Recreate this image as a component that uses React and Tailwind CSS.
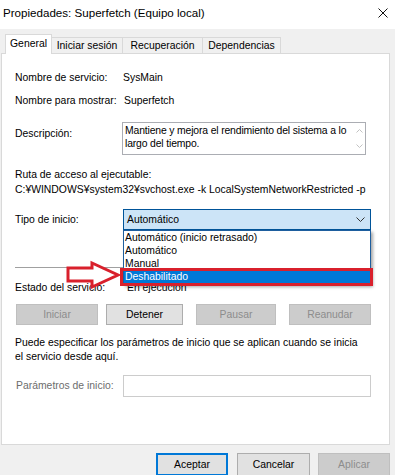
import React from "react";

const tabs = [
  { id: "general", label: "General", w: "w-[47px]" },
  { id: "logon", label: "Iniciar sesión", w: "w-[71px]" },
  { id: "recovery", label: "Recuperación", w: "w-[80px]" },
  { id: "deps", label: "Dependencias", w: "w-[78px]" },
];

const startTypes = [
  "Automático (inicio retrasado)",
  "Automático",
  "Manual",
  "Deshabilitado",
];

function WinButton({ children, disabled, isDefault, className = "" }) {
  // Win10 style push button
  let look = "bg-[#e1e1e1] border border-[#adadad] text-black";
  if (disabled) look = "bg-[#cccccc] border border-[#bfbfbf] text-[#8d8d8d]";
  if (isDefault) look = "bg-[#e1e1e1] border-2 border-[#0078d7] text-black";
  return (
    <div className={`flex items-center justify-center ${look} ${className}`}>
      {children}
    </div>
  );
}

export default function App() {
  return (
    <div
      className="relative w-[395px] h-[475px] overflow-hidden bg-[#f0f0f0] text-[10.4px] text-black"
      style={{ fontFamily: "'Liberation Sans', Arial, sans-serif" }}
    >
      {/* TITLE BAR */}
      <div className="h-[29px] bg-white flex items-center justify-between pl-[3px] pr-[7px]">
        <span className="text-[11.6px] -mt-[4px]">Propiedades: Superfetch (Equipo local)</span>
        <svg width="10" height="10" viewBox="0 0 10 10" className="-mt-[4px]">
          <path d="M0.5 0.5 L9.5 9.5 M9.5 0.5 L0.5 9.5" stroke="#111" strokeWidth="1" />
        </svg>
      </div>

      {/* TABS */}
      <div className="h-[24px] flex items-end pl-[5px]">
        {tabs.map((t, i) =>
          i === 0 ? (
            <div
              key={t.id}
              className={`${t.w} h-[20px] -mb-[1px] relative z-10 bg-white border-t border-l border-r border-[#d9d9d9] flex items-center justify-center pb-[1px]`}
            >
              {t.label}
            </div>
          ) : (
            <div
              key={t.id}
              className={`${t.w} h-[16px] border-t border-r border-[#d9d9d9] flex items-center justify-center`}
            >
              {t.label}
            </div>
          )
        )}
      </div>

      {/* PANEL */}
      <div className="ml-[1px] w-[389px] h-[392px] bg-white border border-[#d9d9d9] pl-[13px] pr-[18px] pt-[16px] flex flex-col">
        <div className="h-[16px] flex items-center">
          <span className="w-[108px]">Nombre de servicio:</span>
          <span>SysMain</span>
        </div>

        <div className="h-[16px] mt-[7px] flex items-center">
          <span className="w-[108px]">Nombre para mostrar:</span>
          <span className="ml-[1px]">Superfetch</span>
        </div>

        <div className="h-[33px] mt-[13px] flex">
          <span className="w-[107px] mt-[4px]">Descripción:</span>
          <div className="w-[244px] h-[33px] border border-[#abadb3] flex">
            <div className="flex-1 pl-[2px] pt-[1px] leading-[13px] tracking-[-0.15px]">
              Mantiene y mejora el rendimiento del sistema a lo largo del tiempo.
            </div>
            <div className="w-[12px] flex flex-col items-center justify-between py-[6px]">
              <svg width="7" height="4" viewBox="0 0 7 4">
                <path d="M0.5 3.5 L3.5 0.5 L6.5 3.5" fill="none" stroke="#c2c2c2" />
              </svg>
              <svg width="7" height="4" viewBox="0 0 7 4">
                <path d="M0.5 0.5 L3.5 3.5 L6.5 0.5" fill="none" stroke="#c2c2c2" />
              </svg>
            </div>
          </div>
        </div>

        <div className="h-[15px] mt-[12px] flex items-center">Ruta de acceso al ejecutable:</div>
        <div className="h-[15px] w-[356px] overflow-hidden whitespace-nowrap flex items-center">
          C:¥WINDOWS¥system32¥svchost.exe -k LocalSystemNetworkRestricted -p
        </div>

        <div className="h-[21px] mt-[12px] flex items-center">
          <span className="w-[108px]">Tipo de inicio:</span>
          <div className="w-[248px] h-[21px] bg-[#cce4f7] border border-[#005499] flex items-center justify-between pl-[3px] pr-[5px]">
            <span>Automático</span>
            <svg width="9" height="5" viewBox="0 0 9 5">
              <path d="M0.5 0.5 L4.5 4.5 L8.5 0.5" fill="none" stroke="#333" />
            </svg>
          </div>
        </div>

        <div className="h-px mt-[37px] w-[356px] bg-[#a0a0a0]" />

        <div className="h-[16px] mt-[12px] flex items-center">
          <span className="w-[112px]">Estado del servicio:</span>
          <span>En ejecución</span>
        </div>

        <div className="h-[21px] mt-[8px] flex">
          <WinButton disabled className="ml-[1px] w-[82px]">Iniciar</WinButton>
          <WinButton className="ml-[8px] w-[77px]">Detener</WinButton>
          <WinButton disabled className="ml-[13px] w-[80px]">Pausar</WinButton>
          <WinButton disabled className="ml-[13px] w-[82px]">Reanudar</WinButton>
        </div>

        <div className="mt-[11px] leading-[14px]">
          <div>Puede especificar los parámetros de inicio que se aplican cuando se inicia</div>
          <div>el servicio desde aquí.</div>
        </div>

        <div className="h-[22px] mt-[11px] flex items-center">
          <span className="w-[108px] pl-[1px] text-[#6d6d6d]">Parámetros de inicio:</span>
          <div className="w-[248px] h-[22px] border border-[#cccccc]" />
        </div>
      </div>

      {/* DIALOG BUTTONS */}
      <div className="mt-[8px] flex justify-end pr-[5px]">
        <WinButton isDefault className="w-[72px] h-[23px]">Aceptar</WinButton>
        <WinButton className="ml-[9px] w-[73px] h-[23px]">Cancelar</WinButton>
        <WinButton disabled className="ml-[8px] w-[72px] h-[23px]">Aplicar</WinButton>
      </div>

      {/* OPEN DROPDOWN LIST (overlay) */}
      <div className="absolute left-[123px] top-[230px] w-[248px] h-[55px] bg-white border border-[#1e5e9e] shadow-[2px_2px_3px_rgba(0,0,0,0.35)] flex flex-col">
        {startTypes.map((s, i) => (
          <div
            key={s}
            className={`h-[13px] leading-[13px] pl-[1px] ${
              i === 3 ? "bg-[#0078d7] text-white" : ""
            }`}
          >
            {s}
          </div>
        ))}
      </div>

      {/* RED HIGHLIGHT BOX */}
      <div className="absolute left-[120px] top-[268px] w-[253px] h-[18px] border-[3px] border-[#d9202c]" />

      {/* RED ARROW */}
      <svg
        className="absolute left-[64px] top-[259px]"
        width="58"
        height="32"
        viewBox="0 0 58 32"
      >
        <polygon
          points="4,9 28,9 28,4 54,16 28,28 28,22 4,22"
          fill="white"
          stroke="#d9202c"
          strokeWidth="3"
          strokeLinejoin="miter"
        />
      </svg>
    </div>
  );
}
